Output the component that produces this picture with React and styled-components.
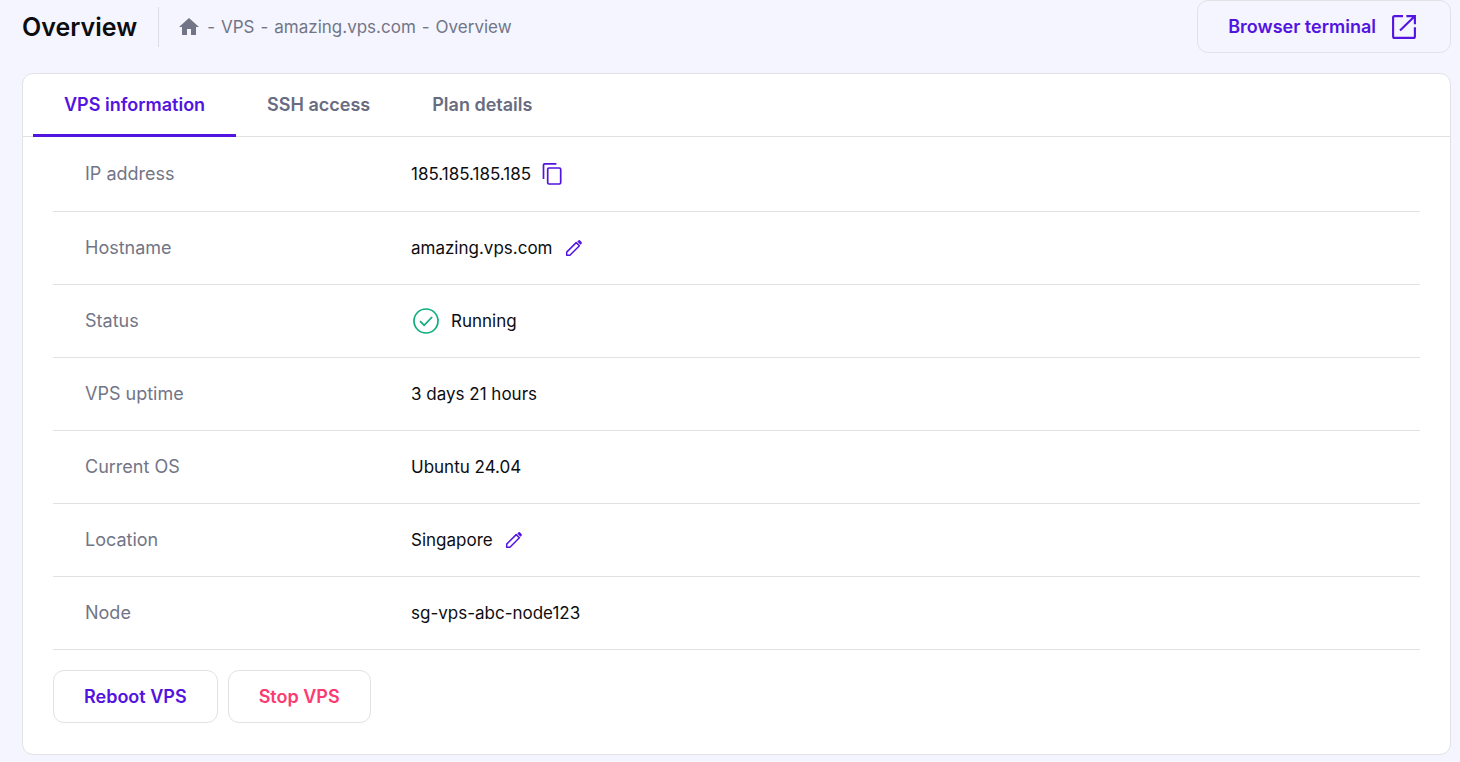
import React, { useState } from 'react';
import styled, { createGlobalStyle } from 'styled-components';
import { MdHome } from 'react-icons/md';

const GlobalStyle = createGlobalStyle`
  *,
  *::before,
  *::after {
    box-sizing: border-box;
  }

  body {
    margin: 0;
    background: #f4f5ff;
    color: #0d0d0f;
    font-family: Inter, 'Liberation Sans', sans-serif;
    font-size: 17px;
    line-height: 24px;
  }

  button {
    font: inherit;
    cursor: pointer;
  }

  svg {
    display: block;
    flex: none;
  }
`;

const Page = styled.main`
  padding: 0 9px 7px 22px;
`;

const Header = styled.header`
  display: flex;
  align-items: center;
  margin-bottom: 20px;
`;

const Title = styled.h1`
  margin: 0;
  padding-right: 21px;
  border-right: 1px solid #dcdce4;
  font-size: 25px;
  font-weight: 600;
  line-height: 40px;
`;

const Breadcrumbs = styled.nav`
  display: flex;
  align-items: center;
  gap: 6px;
  margin-left: 18px;
  color: #727586;
`;

const CrumbLink = styled.a`
  color: inherit;
  text-decoration: none;
`;

const Button = styled.button`
  display: flex;
  align-items: center;
  gap: 12px;
  height: 53px;
  padding: 0 30px;
  border: 1px solid #e2e2e6;
  border-radius: 11px;
  background: transparent;
  color: ${({ $danger }) => ($danger ? '#fc3a72' : '#5313e0')};
  font-size: 18px;
  font-weight: 600;
`;

const TerminalButton = styled(Button)`
  margin-left: auto;
`;

const Card = styled.section`
  border: 1px solid #e2e2e6;
  border-radius: 11px;
  background: #fff;
`;

const Tabs = styled.div`
  display: flex;
  padding: 0 10px;
  border-bottom: 1px solid #e2e2e6;
`;

const Tab = styled.button`
  height: 63px;
  margin-bottom: -1px;
  padding: 2px 31px 0;
  border: 0;
  border-bottom: 3px solid ${({ $active }) => ($active ? '#5313e0' : 'transparent')};
  background: none;
  color: ${({ $active }) => ($active ? '#5313e0' : '#696c80')};
  font-size: 18px;
  font-weight: 600;
`;

const Panel = styled.div`
  padding: 0 30px 31px;
`;

const Details = styled.dl`
  margin: 0;
`;

const Row = styled.div`
  display: grid;
  grid-template-columns: 326px 1fr;
  align-items: center;
  height: 73px;
  padding-left: 32px;
  border-bottom: 1px solid #e2e2e6;

  &:first-child {
    height: 75px;
  }
`;

const Label = styled.dt`
  color: #727586;
  font-size: 18px;
`;

const Value = styled.dd`
  display: flex;
  align-items: center;
  gap: 10px;
  margin: 0;
`;

const IconButton = styled.button`
  padding: 0;
  border: 0;
  background: none;
  color: #5313e0;
`;

const Actions = styled.div`
  display: flex;
  gap: 10px;
  margin-top: 20px;
`;

const OpenIcon = () => (
  <svg width="32" height="32" viewBox="0 0 32 32" fill="none" stroke="currentColor" strokeWidth="2.1" aria-hidden="true">
    <path d="M15 5.1H6.6Q5.1 5.1 5.1 6.6V25.4Q5.1 26.9 6.6 26.9H25.4Q26.9 26.9 26.9 25.4V16.3" />
    <path d="M18.4 5.1H26.9V13.2M26.4 5.6L12 19.4" />
  </svg>
);

const CopyIcon = () => (
  <svg width="24" height="24" viewBox="0 0 24 24" fill="none" stroke="currentColor" strokeWidth="1.7" aria-hidden="true">
    <path d="M2.5 17V3.2Q2.5 1.9 3.8 1.9H15.4" />
    <rect x="6.7" y="6" width="13" height="16" rx="1.3" />
  </svg>
);

const EditIcon = () => (
  <svg width="22" height="22" viewBox="0 0 22 22" fill="none" stroke="currentColor" strokeWidth="1.5" aria-hidden="true">
    <path d="M3.7 18.3V15.1L13.2 5.6L16.4 8.8L6.9 18.3Z" strokeLinejoin="round" />
    <path
      d="M14.3 4.5L15.3 3.5Q16.2 2.6 17.1 3.5L18.5 4.9Q19.4 5.8 18.5 6.7L17.5 7.7Z"
      fill="currentColor"
      stroke="none"
    />
  </svg>
);

const RunningIcon = () => (
  <svg width="30" height="30" viewBox="0 0 30 30" fill="none" stroke="#10ad7f" aria-hidden="true">
    <circle cx="15" cy="15" r="12" strokeWidth="1.7" />
    <path d="M9.1 15.2l4 4.1 8-8.3" strokeWidth="1.8" />
  </svg>
);

const tabs = ['VPS information', 'SSH access', 'Plan details'];

const details = [
  { label: 'IP address', value: '185.185.185.185', copy: true },
  { label: 'Hostname', value: 'amazing.vps.com', edit: true },
  { label: 'Status', value: 'Running', running: true },
  { label: 'VPS uptime', value: '3 days 21 hours' },
  { label: 'Current OS', value: 'Ubuntu 24.04' },
  { label: 'Location', value: 'Singapore', edit: true },
  { label: 'Node', value: 'sg-vps-abc-node123' },
];

const App = () => {
  const [activeTab, setActiveTab] = useState(0);

  return (
    <>
      <GlobalStyle />
      <Page>
        <Header>
          <Title>Overview</Title>
          <Breadcrumbs aria-label="Breadcrumb">
            <CrumbLink href="#home" aria-label="Home">
              <MdHome size={24} />
            </CrumbLink>
            <span>-</span>
            <CrumbLink href="#vps">VPS</CrumbLink>
            <span>-</span>
            <CrumbLink href="#server">amazing.vps.com</CrumbLink>
            <span>-</span>
            <span>Overview</span>
          </Breadcrumbs>
          <TerminalButton type="button">
            Browser terminal
            <OpenIcon />
          </TerminalButton>
        </Header>
        <Card>
          <Tabs role="tablist">
            {tabs.map((tab, index) => (
              <Tab
                key={tab}
                type="button"
                role="tab"
                aria-selected={index === activeTab}
                $active={index === activeTab}
                onClick={() => setActiveTab(index)}
              >
                {tab}
              </Tab>
            ))}
          </Tabs>
          <Panel role="tabpanel">
            <Details>
              {details.map(({ label, value, copy, edit, running }) => (
                <Row key={label}>
                  <Label>{label}</Label>
                  <Value>
                    {running && <RunningIcon />}
                    {value}
                    {copy && (
                      <IconButton type="button" aria-label={`Copy ${label}`}>
                        <CopyIcon />
                      </IconButton>
                    )}
                    {edit && (
                      <IconButton type="button" aria-label={`Edit ${label}`}>
                        <EditIcon />
                      </IconButton>
                    )}
                  </Value>
                </Row>
              ))}
            </Details>
            <Actions>
              <Button type="button">Reboot VPS</Button>
              <Button type="button" $danger>
                Stop VPS
              </Button>
            </Actions>
          </Panel>
        </Card>
      </Page>
    </>
  );
};

export default App;
